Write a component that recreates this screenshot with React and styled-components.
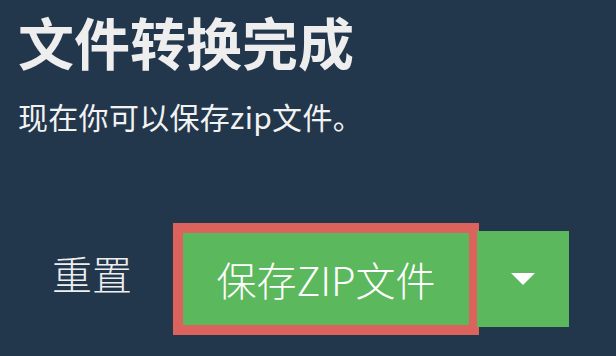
import React from 'react';
import styled, { createGlobalStyle } from 'styled-components';

const GlobalStyle = createGlobalStyle`
  html, body {
    margin: 0;
    padding: 0;
    background: #22364c;
  }
  body {
    font-family: "Noto Sans CJK SC", "Noto Sans", sans-serif;
    color: #eeeeee;
  }
`;

const Page = styled.div`
  width: 616px;
  height: 356px;
  box-sizing: border-box;
  padding: 13px 18px 0;
  overflow: hidden;
`;

const Title = styled.h1`
  margin: 0;
  font-size: 56px;
  line-height: 1;
  font-weight: 700;
  color: #eeeeee;
`;

const Subtitle = styled.p`
  margin: 32px 0 0;
  font-size: 30px;
  line-height: 1;
  font-weight: 400;
  letter-spacing: 0.3px;
  color: #f2f2f2;
`;

const Actions = styled.div`
  display: flex;
  align-items: center;
  margin-top: 100px;
  padding-left: 34px;
`;

const ResetButton = styled.button`
  background: transparent;
  border: none;
  padding: 0 0 13px;
  margin-right: 51px;
  font-family: inherit;
  font-size: 40px;
  font-weight: 300;
  line-height: 1;
  color: #eeeeee;
  cursor: pointer;
`;

const SaveButton = styled.button`
  width: 286px;
  height: 92px;
  border: none;
  padding: 0;
  background: #5cb85c;
  box-shadow: 0 0 0 10px #dc625e;
  font-family: inherit;
  font-size: 40px;
  font-weight: 300;
  line-height: 1;
  color: #ffffff;
  cursor: pointer;
`;

const DropButton = styled.button`
  width: 92px;
  height: 96px;
  margin-left: 8px;
  border: none;
  padding: 0;
  background: #5cb85c;
  display: flex;
  align-items: center;
  justify-content: center;
  cursor: pointer;
`;

const Caret = () => (
  <svg width="24" height="12" viewBox="0 0 24 12">
    <path d="M0 0 L24 0 L12 12 Z" fill="#ffffff" />
  </svg>
);

export default function App() {
  return (
    <>
      <GlobalStyle />
      <Page>
        <Title>文件转换完成</Title>
        <Subtitle>现在你可以保存zip文件。</Subtitle>
        <Actions>
          <ResetButton>重置</ResetButton>
          <SaveButton>保存ZIP文件</SaveButton>
          <DropButton>
            <Caret />
          </DropButton>
        </Actions>
      </Page>
    </>
  );
}
